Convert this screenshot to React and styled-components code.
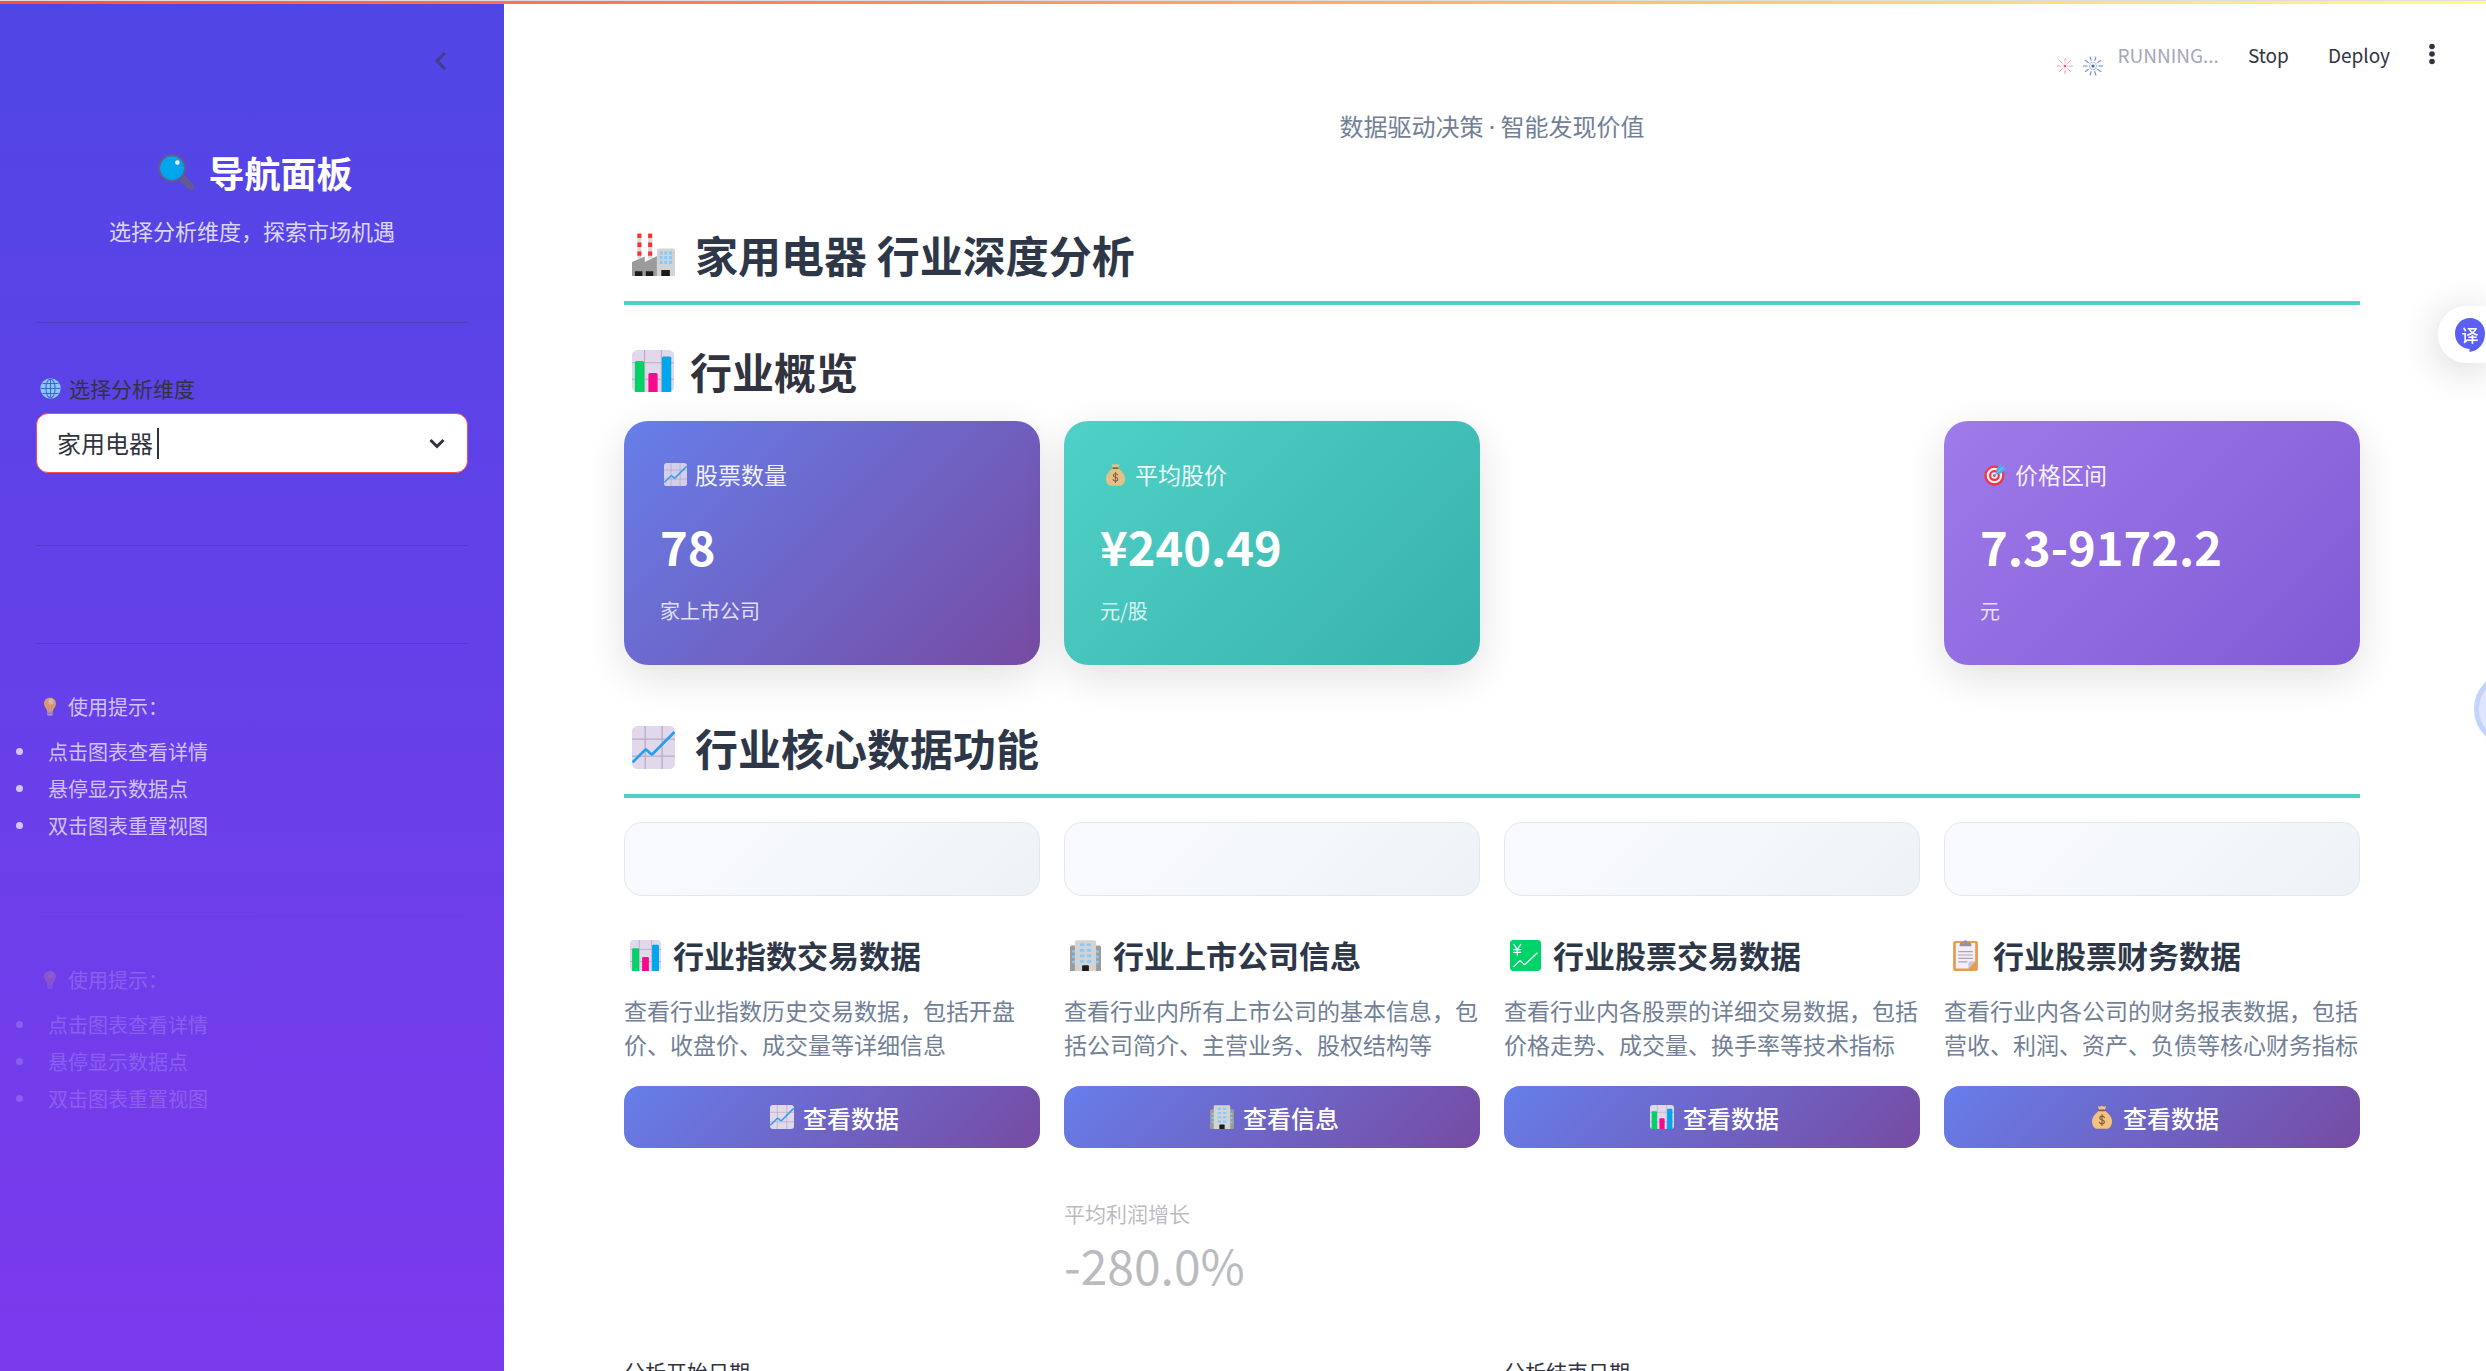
import React from 'react';
import styled, { createGlobalStyle, css } from 'styled-components';

const GlobalStyle = createGlobalStyle`
    * {
        box-sizing : border-box;
    }

    body {
        margin : 0;
        background : #ffffff;
        color : #31333f;
        font-family : 'Noto Sans CJK SC', 'Noto Sans', sans-serif;
    }

    h1, h2, h3, p, ul {
        margin : 0;
        padding : 0;
    }

    button, input {
        font-family : inherit;
        color : inherit;
        background : none;
        border : none;
        padding : 0;
    }

    svg {
        display : block;
        flex-shrink : 0;
    }
`;

const Shell = styled.div`
    display : flex;
    height : 100vh;
    overflow : hidden;
`;

const Decoration = styled.div`
    position : fixed;
    top : 0;
    left : 0;
    right : 0;
    height : 4px;
    border-top : 1px solid #dddddd;
    background : linear-gradient(90deg, #ff4b4b, #fffd80);
    z-index : 2;
`;

/* sidebar */

const Sidebar = styled.aside`
    width : 504px;
    flex-shrink : 0;
    padding : 0 36px;
    overflow : hidden;
    background : linear-gradient(180deg, #4f46e5 0%, #7c3aed 100%);
`;

const SidebarTop = styled.div`
    display : flex;
    justify-content : flex-end;
    align-items : center;
    height : 122px;
    padding-right : 12px;
`;

const IconButton = styled.button`
    display : flex;
    align-items : center;
    justify-content : center;
    width : 30px;
    height : 30px;
    cursor : pointer;
`;

const PanelTitle = styled.h2`
    display : flex;
    justify-content : center;
    align-items : center;
    gap : 7px;
    margin-top : 23px;
    font-size : 36px;
    line-height : 54px;
    font-weight : bold;
    color : white;
`;

const PanelText = styled.p`
    margin-top : 15px;
    font-size : 22px;
    line-height : 32px;
    text-align : center;
    white-space : nowrap;
    color : rgba(255, 255, 255, 0.8);
`;

const Divider = styled.hr`
    height : 1px;
    margin : ${props => props.$top}px 0 0;
    border : none;
    background : rgba(49, 51, 63, 0.25);
`;

const FieldLabel = styled.label`
    display : flex;
    align-items : center;
    gap : 4px;
    margin-top : 49px;
    font-size : 21px;
    line-height : 32px;
`;

const SelectBox = styled.div`
    display : flex;
    align-items : center;
    height : 60px;
    margin-top : 9px;
    padding : 0 15px 0 20px;
    border : 1px solid #ff4b4b;
    border-radius : 12px;
    background : white;
`;

const SelectInput = styled.input`
    width : 100px;
    height : 36px;
    font-size : 24px;
    line-height : 36px;
    outline : none;
`;

const Caret = styled.span`
    width : 2px;
    height : 31px;
    margin-right : auto;
    background : #31333f;
`;

const TipBox = styled.section`
    opacity : ${props => props.$stale ? 0.25 : 1};
`;

const TipHead = styled.p`
    display : flex;
    align-items : center;
    gap : 4px;
    margin-top : 46px;
    font-size : 20px;
    line-height : 34px;
    color : rgba(255, 255, 255, 0.7);

    svg {
        opacity : 0.75;
    }
`;

const TipList = styled.ul`
    margin : 9px 0 0 -20px;
    list-style : none;
`;

const TipItem = styled.li`
    display : flex;
    align-items : center;
    gap : 25px;
    font-size : 20px;
    line-height : 37px;
    color : rgba(255, 255, 255, 0.7);

    &::before {
        content : '';
        width : 7px;
        height : 7px;
        border-radius : 50%;
        background : currentColor;
    }
`;

/* main area */

const Main = styled.main`
    flex : 1;
    min-width : 0;
    overflow : hidden;
`;

const Header = styled.header`
    display : flex;
    align-items : center;
    justify-content : flex-end;
    height : 108px;
    padding-right : 39px;
    font-size : 19px;
`;

const Running = styled.span`
    margin-left : 14px;
    color : #a3a8b8;
`;

const HeaderButton = styled.button`
    margin-left : ${props => props.$gap}px;
    font-size : 19px;
    cursor : pointer;
`;

const MenuButton = styled(IconButton)`
    margin-left : 27px;
`;

const Sparks = styled.span`
    display : flex;
    align-items : center;
    gap : 10px;
    padding-top : 23px;
`;

const Content = styled.div`
    padding : 0 126px 0 120px;
`;

const Slogan = styled.p`
    font-size : 24px;
    line-height : 36px;
    text-align : center;
    color : #718096;
`;

/* the CJK face draws the middle dot full width */
const Dot = styled.span`
    font-family : 'Noto Sans', sans-serif;
`;

const SectionTitle = styled.h1`
    display : flex;
    align-items : center;
    gap : 12px;
    margin-top : ${props => props.$top}px;
    padding-bottom : 21px;
    border-bottom : 4px solid #4fd1c7;
    font-size : 43px;
    line-height : 52px;
    font-weight : bold;
    color : #2d3748;
`;

const SubTitle = styled.h2`
    display : flex;
    align-items : center;
    gap : 8px;
    margin : 41px 0 25px;
    font-size : 42px;
    line-height : 50px;
    font-weight : bold;
`;

const Columns = styled.div`
    display : grid;
    grid-template-columns : repeat(${props => props.$count || 4}, minmax(0, 1fr));
    column-gap : 24px;
    margin-top : ${props => props.$top || 0}px;
`;

const tones = {
    indigo : 'linear-gradient(135deg, #667eea 0%, #764ba2 100%)',
    teal : 'linear-gradient(135deg, #4fd1c7 0%, #38b2ac 100%)',
    violet : 'linear-gradient(135deg, #9f7aea 0%, #805ad5 100%)'
};

const StatCard = styled.article`
    grid-column : ${props => props.$column};
    padding : 36px;
    border-radius : 24px;
    background : ${props => tones[props.$tone]};
    box-shadow : 0 12px 42px rgba(0, 0, 0, 0.12);
    color : white;
`;

const StatLabel = styled.h3`
    display : flex;
    align-items : center;
    gap : 4px;
    font-size : 23px;
    line-height : 34px;
    font-weight : 400;
    opacity : 0.9;
`;

const StatValue = styled.p`
    margin-top : 25px;
    font-size : 47px;
    line-height : 60px;
    font-weight : bold;
`;

const StatUnit = styled.p`
    margin-top : 17px;
    font-size : 20px;
    line-height : 36px;
    opacity : 0.8;
`;

const EmptyCard = styled.div`
    padding : 36px;
    border : 1px solid #e2e8f0;
    border-radius : 18px;
    background : linear-gradient(135deg, #fafafd 0%, #f4f8fb 50%, #edf2f7 100%);
`;

const FeatureTitle = styled.h3`
    display : flex;
    align-items : center;
    gap : 6px;
    margin-top : 40px;
    font-size : 31px;
    line-height : 38px;
    font-weight : bold;
    color : #2d3748;
`;

const FeatureText = styled.p`
    margin-top : 19px;
    font-size : 23px;
    line-height : 34px;
    color : #718096;
`;

const ActionButton = styled.button`
    display : flex;
    align-items : center;
    justify-content : center;
    gap : 4px;
    width : 100%;
    height : 62px;
    margin-top : 25px;
    border-radius : 16px;
    background : ${tones.indigo};
    font-size : 24px;
    font-weight : 500;
    color : white;
    cursor : pointer;
`;

const Metric = styled.div`
    grid-column : 2;
    opacity : 0.33;
`;

const MetricLabel = styled.p`
    font-size : 21px;
    line-height : 32px;
`;

const MetricValue = styled.p`
    margin-top : 5px;
    font-size : 48px;
    line-height : 60px;
`;

/* widgets docked on the right edge of the window */

const docked = css`
    position : fixed;
    right : 0;
    z-index : 3;
`;

const TranslateTab = styled.button`
    ${docked}
    top : 306px;
    display : flex;
    align-items : center;
    width : 48px;
    height : 57px;
    padding-left : 17px;
    border-radius : 28px 0 0 28px;
    background : white;
    box-shadow : 0 6px 40px rgba(0, 0, 0, 0.18);
`;

const Bubble = styled.span`
    position : relative;
    display : flex;
    align-items : center;
    justify-content : center;
    width : 30px;
    height : 33px;
    font-size : 17px;
    line-height : 20px;
    color : white;

    svg {
        position : absolute;
        inset : 0;
    }

    b {
        position : relative;
        font-weight : 500;
    }
`;

const AssistantClip = styled.div`
    ${docked}
    top : 671px;
    width : 12px;
    height : 76px;
    overflow : hidden;
`;

const AssistantBall = styled.div`
    width : 76px;
    height : 76px;
    border : 5px solid #c3d3fb;
    border-radius : 50%;
    background : #dfe5fa;
`;

/* emoji drawings, 32 x 32 grid */

const glyphs = {
    magnifier : (
        <>
            <path d="M19 19l10 10" stroke="#635994" strokeWidth="6.5" strokeLinecap="round" />
            <circle cx="12.5" cy="12.5" r="11.6" fill="#00a6ed" stroke="#635994" strokeWidth="2" />
            <circle cx="17.2" cy="7.6" r="2" fill="white" />
        </>
    ),
    globe : (
        <>
            <circle cx="16" cy="16" r="15.5" fill="#83cbff" />
            <g fill="none" stroke="#4a5fd0" strokeWidth="1.6">
                <ellipse cx="16" cy="16" rx="7" ry="14.5" />
                <path d="M16 1v30M1 16h30M4 8.500h24M4 23.500h24" />
            </g>
        </>
    ),
    bulb : (
        <>
            <path d="M16 1c-6 0-9.600 4.200-9.600 9.200 0 4.600 2.600 6.500 4 9.200l1.600 4.600h8l1.600-4.600c1.400-2.700 4-4.600 4-9.200C25.600 5.200 22 1 16 1z" fill="#fcbb47" />
            <path d="M12.500 12l2 12M19.500 12l-2 12" stroke="#f3a14b" strokeWidth="1.200" fill="none" />
            <ellipse cx="17.500" cy="7" rx="4" ry="4.500" fill="#fbe09a" />
            <rect x="11.500" y="23" width="9" height="7" rx="2" fill="#b9a9c9" />
            <path d="M11.500 26h9" stroke="#8b7a9c" strokeWidth="1.200" />
        </>
    ),
    factory : (
        <>
            <path d="M4 0h3v19H4zM12 0h3v19h-3z" fill="#d9d9d9" />
            <path d="M4 .5h3v3.200H4zM4 7h3v3.400H4zM4 13.800h3V17H4zM12 .5h3v3.200h-3zM12 7h3v3.400h-3zM12 13.800h3V17h-3z" fill="#ff2f2f" />
            <path d="M0 21.500l9.500-4v4l9.500-4.500V32H0z" fill="#9b9b9b" />
            <path d="M18.500 13q0-1.500 1.500-1.500h10.500q1.500 0 1.500 1.500v19H18.500z" fill="#d3d3d3" />
            <path d="M20.500 13.700h2.300V16h-2.300zM24 13.700h2.300V16H24zM27.500 13.700h2.300V16h-2.300zM20.500 17.200h2.300v2.300h-2.300zM24 17.200h2.300v2.300H24zM27.500 17.200h2.300v2.300h-2.300zM20.500 20.700h2.300V23h-2.300zM24 20.700h2.300V23H24zM27.500 20.700h2.300V23h-2.300z" fill="#83cbff" />
            <path d="M2.200 28.500h5.500V32H2.200zM10.300 28.500h5.500V32h-5.500zM21.800 27.500h6.400V32h-6.400z" fill="#1c1c1c" />
        </>
    ),
    bars : (
        <>
            <rect width="32" height="32" rx="4" fill="#e1d8ec" />
            <path d="M9.600 0v32M22.400 0v32M0 9.700h32M0 22.300h32" stroke="#b9aebf" strokeWidth="0.9" />
            <path d="M2.200 9.600q0-1.200 1.200-1.200h4.700q1.200 0 1.200 1.200V32H2.200z" fill="#00d26a" />
            <path d="M12.500 18.700q0-1.200 1.200-1.200h4.600q1.200 0 1.200 1.200V32h-7z" fill="#f70a8d" />
            <path d="M22.800 6.200q0-1.200 1.200-1.200h4.700q1.200 0 1.200 1.200V32h-7.100z" fill="#00a6ed" />
        </>
    ),
    trend : (
        <>
            <rect width="32" height="32" rx="4" fill="#e1d8ec" />
            <path d="M9.800 0v32M22.400 0v32M0 9.800h32M0 22.400h32" stroke="#b9aebf" strokeWidth="1" />
            <path d="M.4 27l9.100-9q.8-.7 1.600 0l2.800 2.700q.8.700 1.600 0L31.600 4.500" fill="none" stroke="#26a0ee" strokeWidth="2" />
        </>
    ),
    bag : (
        <>
            <path d="M11.500 1.800q2 1 3.200 0 1.300-1.400 2.600 0 1.200 1 3.200 0 1.200-.3.800 1L19.500 7h-7l-1.800-4.200q-.4-1.300.8-1z" fill="#f3c27e" />
            <path d="M12.300 7.500h7.400C25 11 29.300 16 29.300 21.500 29.300 28 26 31.700 21.500 31.700h-11C6 31.700 2.700 28 2.700 21.500 2.700 16 7 11 12.300 7.500z" fill="#f3c27e" />
            <rect x="12" y="6" width="8" height="2.300" rx="1" fill="#86573f" />
            <path d="M19.200 16.800q-.8-1.900-3.200-1.900-3 .1-3 2.500 0 2 3 2.500 3.200.5 3.200 2.800 0 2.500-3.200 2.500-2.600 0-3.400-2.200M16 12.800v14.400" fill="none" stroke="#86573f" strokeWidth="1.500" strokeLinecap="round" />
        </>
    ),
    target : (
        <>
            <circle cx="14.500" cy="17.500" r="14" fill="#f8312f" />
            <circle cx="14.500" cy="17.500" r="10.800" fill="white" />
            <circle cx="14.500" cy="17.500" r="7.600" fill="#f8312f" />
            <circle cx="14.500" cy="17.500" r="4.500" fill="white" />
            <circle cx="14.500" cy="17.500" r="2" fill="#f8312f" />
            <path d="M14.500 17.500L22 10" stroke="#26c9fc" strokeWidth="1.600" />
            <path d="M17 14.500V9.500L23.500 1l1.500 5.500L31.500 8 23 15z" fill="#3fb8f5" />
            <path d="M19 13l8.500-8" stroke="#8fe0ff" strokeWidth="1" />
        </>
    ),
    building : (
        <>
            <path d="M0 7.500Q0 5.800 1.700 5.800h28.600Q32 5.800 32 7.500V32H0z" fill="#9b9b9b" />
            <path d="M5 2q0-1.700 1.700-1.700h18.600Q27 .3 27 2v30H5z" fill="#d3d3d3" />
            <path d="M10.300 3.500h4.400v2.800h-4.400zM17.300 3.500h4.400v2.800h-4.400zM10.300 9.300h4.400v2.800h-4.400zM17.300 9.300h4.400v2.800h-4.400zM10.300 15h4.400v2.800h-4.400zM17.300 15h4.400v2.800h-4.400zM10.300 20.800h4.400v2.800h-4.400zM17.300 20.800h4.400v2.800h-4.400zM2.200 10.500H5v2.600H2.200zM2.200 16H5v2.600H2.200zM2.200 21.500H5v2.600H2.200zM27 10.500h2.800v2.600H27zM27 16h2.800v2.600H27zM27 21.500h2.800v2.600H27z" fill="#83cbff" />
            <path d="M12.500 27q0-1 1-1h5q1 0 1 1v5h-7z" fill="#1c1c1c" />
        </>
    ),
    yen : (
        <>
            <rect width="32" height="32" rx="3.500" fill="#00d26a" />
            <g fill="none" stroke="white" strokeWidth="1.300" strokeLinecap="round" strokeLinejoin="round">
                <path d="M4 4.500l3.500 5.500L11 4.500M7.500 10v5.500M4 10h7M4 12.800h7" />
                <path d="M4 27.500l5.500-5.500q1-.9 2 0l2.500 2.700q1 .9 2 0L28 13.500" />
            </g>
        </>
    ),
    clipboard : (
        <>
            <rect x="3.200" y="1" width="25.600" height="31" rx="2" fill="#e39d4d" />
            <path d="M6 3h20v19l-7 7.500H6z" fill="#f3eef8" />
            <path d="M26 22h-4q-3 0-3 3v4.500z" fill="#cdc4d6" />
            <path d="M8.500 12h15M8.500 15.500h15M8.500 19h15M8.500 22.500h9.500" stroke="#aca3b3" strokeWidth="1.200" />
            <path d="M10 4.500q0-2 2-2h2q0-2.300 2-2.300t2 2.300h2q2 0 2 2v2H10z" fill="#998ea4" />
        </>
    )
};

const EmojiSvg = styled.svg`
    margin : 0 ${props => Math.round(props.width * 0.19)}px;
`;

const Emoji = ({ name, size }) => (
    <EmojiSvg width={size} height={size} viewBox="0 0 32 32" fill="none" aria-hidden="true">
        {glyphs[name]}
    </EmojiSvg>
);

const Spark = ({ size, color, rays }) => (
    <svg width={size} height={size} viewBox="-10 -10 20 20" aria-hidden="true">
        <circle r="1.600" fill={color} />
        {
            Array.from({ length : rays }, (_, i) => (
                <path
                    key={i}
                    d="M0 -3v-1.200M0 -5.500v-4.500"
                    stroke={color}
                    strokeWidth="1"
                    opacity="0.75"
                    transform={`rotate(${i * 360 / rays + (rays % 4 ? 180 / rays : 0)})`}
                />
            ))
        }
    </svg>
);

const tips = ['点击图表查看详情', '悬停显示数据点', '双击图表重置视图'];

const stats = [
    { icon : 'trend', label : '股票数量', value : '78', unit : '家上市公司', tone : 'indigo', column : 1 },
    { icon : 'bag', label : '平均股价', value : '¥240.49', unit : '元/股', tone : 'teal', column : 2 },
    { icon : 'target', label : '价格区间', value : '7.3-9172.2', unit : '元', tone : 'violet', column : 4 }
];

const features = [
    {
        icon : 'bars',
        title : '行业指数交易数据',
        text : '查看行业指数历史交易数据，包括开盘价、收盘价、成交量等详细信息',
        actionIcon : 'trend',
        action : '查看数据'
    },
    {
        icon : 'building',
        title : '行业上市公司信息',
        text : '查看行业内所有上市公司的基本信息，包括公司简介、主营业务、股权结构等',
        actionIcon : 'building',
        action : '查看信息'
    },
    {
        icon : 'yen',
        title : '行业股票交易数据',
        text : '查看行业内各股票的详细交易数据，包括价格走势、成交量、换手率等技术指标',
        actionIcon : 'bars',
        action : '查看数据'
    },
    {
        icon : 'clipboard',
        title : '行业股票财务数据',
        text : '查看行业内各公司的财务报表数据，包括营收、利润、资产、负债等核心财务指标',
        actionIcon : 'bag',
        action : '查看数据'
    }
];

const Tips = ({ top, stale }) => (
    <TipBox $stale={stale}>
        <Divider $top={top} />
        <TipHead><Emoji name="bulb" size={20} />使用提示：</TipHead>
        <TipList>
            {tips.map(tip => <TipItem key={tip}>{tip}</TipItem>)}
        </TipList>
    </TipBox>
);

const App = () => (
    <>
        <GlobalStyle />
        <Decoration />
        <Shell>
            <Sidebar>
                <SidebarTop>
                    <IconButton aria-label="收起">
                        <svg width="30" height="30" viewBox="0 0 30 30" fill="none" stroke="#3f3d8c" strokeWidth="3">
                            <path d="M19 7l-8 8 8 8" />
                        </svg>
                    </IconButton>
                </SidebarTop>
                <PanelTitle><Emoji name="magnifier" size={36} />导航面板</PanelTitle>
                <PanelText>选择分析维度，探索市场机遇</PanelText>
                <Divider $top={76} />
                <FieldLabel htmlFor="dimension"><Emoji name="globe" size={21} />选择分析维度</FieldLabel>
                <SelectBox>
                    <SelectInput id="dimension" role="combobox" aria-expanded="false" defaultValue="家用电器" />
                    <Caret />
                    <IconButton aria-label="展开">
                        <svg width="30" height="30" viewBox="0 0 30 30" fill="none" stroke="#31333f" strokeWidth="3">
                            <path d="M8.500 12l6.500 6.500 6.500-6.500" />
                        </svg>
                    </IconButton>
                </SelectBox>
                <Divider $top={72} />
                <Tips top={97} />
                <Tips top={72} stale />
            </Sidebar>
            <Main>
                <Header>
                    <Sparks>
                        <Spark size={16} color="#f4516c" rays={8} />
                        <Spark size={20} color="#3b5fd9" rays={10} />
                    </Sparks>
                    <Running>RUNNING...</Running>
                    <HeaderButton $gap={29}>Stop</HeaderButton>
                    <HeaderButton $gap={39}>Deploy</HeaderButton>
                    <MenuButton aria-label="菜单">
                        <svg width="30" height="30" viewBox="0 0 30 30" fill="#31333f">
                            <circle cx="15" cy="7.500" r="2.800" />
                            <circle cx="15" cy="15" r="2.800" />
                            <circle cx="15" cy="22.500" r="2.800" />
                        </svg>
                    </MenuButton>
                </Header>
                <Content>
                    <Slogan>数据驱动决策 <Dot>·</Dot> 智能发现价值</Slogan>
                    <SectionTitle $top={83}><Emoji name="factory" size={43} />家用电器 行业深度分析</SectionTitle>
                    <SubTitle><Emoji name="bars" size={42} />行业概览</SubTitle>
                    <Columns>
                        {
                            stats.map(stat => (
                                <StatCard key={stat.label} $tone={stat.tone} $column={stat.column}>
                                    <StatLabel><Emoji name={stat.icon} size={23} />{stat.label}</StatLabel>
                                    <StatValue>{stat.value}</StatValue>
                                    <StatUnit>{stat.unit}</StatUnit>
                                </StatCard>
                            ))
                        }
                    </Columns>
                    <SectionTitle $top={56}><Emoji name="trend" size={43} />行业核心数据功能</SectionTitle>
                    <Columns $top={24}>
                        {
                            features.map(item => (
                                <section key={item.title}>
                                    <EmptyCard />
                                    <FeatureTitle><Emoji name={item.icon} size={31} />{item.title}</FeatureTitle>
                                    <FeatureText>{item.text}</FeatureText>
                                    <ActionButton><Emoji name={item.actionIcon} size={24} />{item.action}</ActionButton>
                                </section>
                            ))
                        }
                    </Columns>
                    <Columns $top={49}>
                        <Metric>
                            <MetricLabel>平均利润增长</MetricLabel>
                            <MetricValue>-280.0%</MetricValue>
                        </Metric>
                    </Columns>
                    <Columns $count={2} $top={61}>
                        <MetricLabel>分析开始日期</MetricLabel>
                        <MetricLabel>分析结束日期</MetricLabel>
                    </Columns>
                </Content>
            </Main>
        </Shell>
        <TranslateTab aria-label="翻译">
            <Bubble>
                <svg width="30" height="34" viewBox="0 0 30 34">
                    <path d="M15 0C6.500 0 0 6.500 0 15.500 0 24 6 30.500 14.500 31v3C23 33 30 26 30 15.500 30 6.500 23.500 0 15 0z" fill="#5b5ff5" />
                </svg>
                <b>译</b>
            </Bubble>
        </TranslateTab>
        <AssistantClip>
            <AssistantBall />
        </AssistantClip>
    </>
);

export default App;
